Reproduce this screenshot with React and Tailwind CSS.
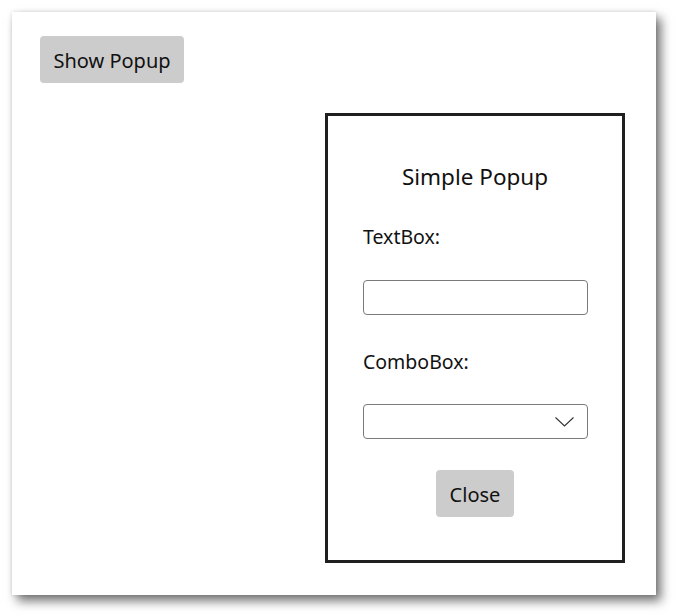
import React from "react";

export default function App() {
  const font = { fontFamily: '"Noto Sans", "Open Sans", sans-serif' };
  return (
    <div className="w-[676px] h-[615px] bg-white relative" style={font}>
      <div className="absolute left-[12px] top-[12px] w-[644px] h-[583px] bg-white shadow-[5px_6px_10px_rgba(0,0,0,0.55),0_0_4px_rgba(0,0,0,0.12)]">
        <div className="pt-[24px] pl-[28px]">
          <button className="w-[144px] h-[47px] bg-[#cccccc] rounded-[4px] text-[20px] text-[#111] leading-none pt-[2px]">
            Show Popup
          </button>
        </div>
        <div className="absolute left-[313px] top-[101px] w-[300px] h-[450px] border-[3px] border-[#1f1f1f] bg-white flex flex-col px-[35px] pt-[46px]">
          <div className="h-[30px] leading-[30px] text-center text-[22.5px] text-[#111]">Simple Popup</div>
          <div className="mt-[33px] h-[24px] leading-[24px] text-[19.5px] text-[#111]">TextBox:</div>
          <div className="mt-[31px] h-[35px] w-[225px] border-[1.5px] border-[#7a7a7a] rounded-[4px] bg-white"></div>
          <div className="mt-[35px] h-[24px] leading-[24px] text-[19.5px] text-[#111]">ComboBox:</div>
          <div className="mt-[30px] h-[35px] w-[225px] border-[1.5px] border-[#7a7a7a] rounded-[4px] bg-white flex items-center justify-end pr-[13px]">
            <svg width="19" height="10" viewBox="0 0 19 10">
              <polyline points="0.5,0.5 9.5,9 18.5,0.5" fill="none" stroke="#333" strokeWidth="1.1" />
            </svg>
          </div>
          <div className="mt-[31px] flex justify-center">
            <button className="w-[78px] h-[47px] bg-[#cccccc] rounded-[4px] text-[20px] text-[#111] leading-none pt-[2px]">
              Close
            </button>
          </div>
        </div>
      </div>
    </div>
  );
}
